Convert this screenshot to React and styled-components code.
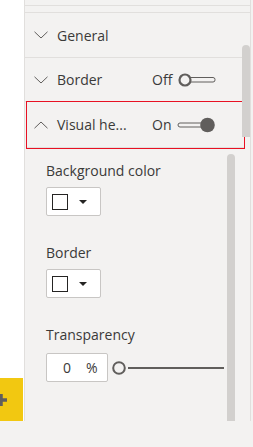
import React from "react";
import styled, { createGlobalStyle } from "styled-components";

const Global = createGlobalStyle`
  html, body { margin: 0; padding: 0; background: #ffffff; }
  body { font-family: "Segoe UI", "Open Sans", sans-serif; color: #3b3a39; }
`;

const Page = styled.div`
  width: 253px;
  height: 447px;
  display: flex;
  flex-direction: column;
  background: #f3f2f1;
  overflow: hidden;
`;

const Main = styled.div`
  height: 421px;
  display: flex;
`;

const Canvas = styled.div`
  width: 24px;
  background: #ffffff;
  display: flex;
  flex-direction: column;
  justify-content: flex-end;
  overflow: hidden;
`;

const AddTab = styled.div`
  width: 23px;
  height: 43px;
  background: #f2c811;
  display: flex;
  align-items: center;
  position: relative;
`;

const Plus = styled.svg`
  position: absolute;
  left: -6px;
  top: 15px;
`;

const Panel = styled.div`
  width: 225px;
  border-left: 1px solid #e1dfdd;
  border-right: 1px solid #e1dfdd;
  display: flex;
  flex-direction: column;
  position: relative;
`;

const TopStrip = styled.div`
  margin-top: 5px;
  height: 6px;
  border-top: 1px solid #e1dfdd;
  border-bottom: 1px solid #e1dfdd;
`;

const Header = styled.div`
  height: ${(p) => p.h || 44}px;
  display: flex;
  align-items: center;
  padding: 0 0 0 ${(p) => p.pl || 9}px;
  border-bottom: 1px solid #e1dfdd;
  font-size: 14px;
  color: #3b3a39;
`;

const Focus = styled.div`
  margin: -1px 5px 0 1px;
  border: 1px solid #e81123;
`;

const Chevron = styled.svg`
  width: 14px;
  height: 8px;
  margin-right: 9px;
  flex: none;
`;

const Title = styled.span`
  width: 95px;
  white-space: nowrap;
`;

const ToggleLabel = styled.span`
  width: 25px;
`;

const Toggle = styled.svg`
  display: block;
`;

const OuterThumb = styled.div`
  position: absolute;
  right: 0px;
  top: 45px;
  width: 8px;
  height: 92px;
  border-radius: 4px 4px 0 0;
  background: #d2d0ce;
`;

const Body = styled.div`
  flex: 1;
  display: flex;
`;

const Content = styled.div`
  flex: 1;
  padding: 12px 0 0 21px;
  display: flex;
  flex-direction: column;
`;

const InnerThumb = styled.div`
  width: 8px;
  margin: 5px 15px 0 0;
  border-radius: 4px 4px 0 0;
  background: #d2d0ce;
`;

const Label = styled.div`
  font-size: 14px;
  line-height: 20px;
  color: #3b3a39;
  margin-bottom: ${(p) => p.gap || 6}px;
`;

const Swatch = styled.div`
  width: 48px;
  height: 27px;
  background: #ffffff;
  border: 1px solid #c8c6c4;
  border-radius: 2px;
  display: flex;
  align-items: center;
  padding-left: 5px;
  margin-bottom: 27px;
`;

const Square = styled.div`
  width: 14px;
  height: 14px;
  border: 1px solid #252423;
  background: #ffffff;
`;

const Caret = styled.div`
  margin-left: 11px;
  width: 0;
  height: 0;
  border-left: 4px solid transparent;
  border-right: 4px solid transparent;
  border-top: 4px solid #252423;
`;

const SliderRow = styled.div`
  display: flex;
  align-items: center;
`;

const Percent = styled.div`
  width: 60px;
  height: 27px;
  background: #ffffff;
  border: 1px solid #c8c6c4;
  border-radius: 2px;
  display: flex;
  align-items: center;
  font-size: 14px;
  color: #3b3a39;
`;

const Num = styled.span`
  width: 24px;
  text-align: right;
`;

const Unit = styled.span`
  margin-left: 15px;
`;

const Track = styled.svg`
  margin-left: 3px;
  display: block;
`;

const Down = () => (
  <Chevron viewBox="0 0 14 8">
    <path d="M0.5 0.8 L7 7 L13.5 0.8" fill="none" stroke="#605e5c" strokeWidth="1" />
  </Chevron>
);

const Up = () => (
  <Chevron viewBox="0 0 14 8">
    <path d="M0.5 7.2 L7 1 L13.5 7.2" fill="none" stroke="#605e5c" strokeWidth="1" />
  </Chevron>
);

const SwitchOff = () => (
  <Toggle width="40" height="16" viewBox="0 0 40 16">
    <rect x="10" y="5.5" width="28" height="4.5" rx="2" fill="none" stroke="#605e5c" strokeWidth="1" />
    <circle cx="8" cy="8" r="5.5" fill="#f3f2f1" stroke="#605e5c" strokeWidth="2.2" />
  </Toggle>
);

const SwitchOn = () => (
  <Toggle width="40" height="16" viewBox="0 0 40 16">
    <rect x="1" y="6" width="28" height="4" rx="2" fill="none" stroke="#605e5c" strokeWidth="1" />
    <circle cx="30.5" cy="8" r="7.3" fill="#605e5c" />
  </Toggle>
);

const ColorPicker = () => (
  <Swatch>
    <Square />
    <Caret />
  </Swatch>
);

export default function App() {
  return (
    <>
      <Global />
      <Page>
        <Main>
          <Canvas>
            <AddTab>
              <Plus width="14" height="14" viewBox="0 0 14 14">
                <path d="M7 1 V13 M1 7 H13" stroke="#605e5c" strokeWidth="3.5" />
              </Plus>
            </AddTab>
          </Canvas>
          <Panel>
            <TopStrip />
            <Header>
              <Down />
              <Title>General</Title>
            </Header>
            <Header h={43}>
              <Down />
              <Title>Border</Title>
              <ToggleLabel>Off</ToggleLabel>
              <SwitchOff />
            </Header>
            <Focus>
              <Header h={45} pl={7}>
                <Up />
                <Title>Visual he...</Title>
                <ToggleLabel>On</ToggleLabel>
                <SwitchOn />
              </Header>
            </Focus>
            <Body>
              <Content>
                <Label>Background color</Label>
                <ColorPicker />
                <Label>Border</Label>
                <ColorPicker />
                <Label gap={8}>Transparency</Label>
                <SliderRow>
                  <Percent>
                    <Num>0</Num>
                    <Unit>%</Unit>
                  </Percent>
                  <Track width="114" height="16" viewBox="0 0 114 16">
                    <line x1="17" y1="8" x2="113" y2="8" stroke="#605e5c" strokeWidth="2" />
                    <circle cx="8" cy="8" r="5.8" fill="#f3f2f1" stroke="#605e5c" strokeWidth="2" />
                  </Track>
                </SliderRow>
              </Content>
              <InnerThumb />
            </Body>
            <OuterThumb />
          </Panel>
        </Main>
      </Page>
    </>
  );
}
